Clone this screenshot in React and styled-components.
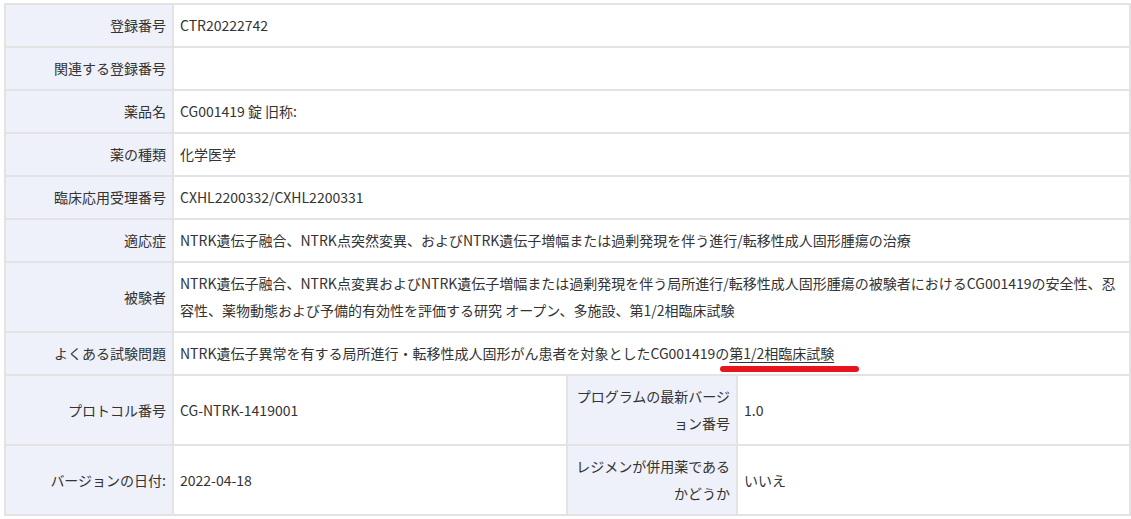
import React from "react";
import styled, { createGlobalStyle } from "styled-components";

const G = createGlobalStyle`
  body { margin: 0; background: #fff; font-family: "Noto Sans CJK JP", "Noto Sans", sans-serif; }
`;
const Wrap = styled.div` padding: 3px 0 0 4px; width: 1127px; `;
const Table = styled.table`
  width: 1127px; border-collapse: collapse; table-layout: fixed;
  font-size: 14px; color: #333;
`;
const Th = styled.th`
  background: #eef1f9; border: 2px solid #e3e3e3; font-weight: normal;
  text-align: right; padding: 7px 6px; line-height: 27px; vertical-align: middle;
`;
const Td = styled.td`
  border: 2px solid #e3e3e3; padding: 7px 6px; line-height: 27px; vertical-align: middle;
`;
const Mark = styled.span`
  position: relative; text-decoration: underline; text-underline-offset: 3px;
  &::after { content: ""; position: absolute; left: -9px; right: -25px; bottom: -9px; height: 6px; background: #e8151d; border-radius: 3px; }
`;

const single = [
  ["登録番号", "CTR20222742"],
  ["関連する登録番号", ""],
  ["薬品名", "CG001419 錠 旧称:"],
  ["薬の種類", "化学医学"],
  ["臨床応用受理番号", "CXHL2200332/CXHL2200331"],
  ["適応症", "NTRK遺伝子融合、NTRK点突然変異、およびNTRK遺伝子増幅または過剰発現を伴う進行/転移性成人固形腫瘍の治療"],
  ["被験者", "NTRK遺伝子融合、NTRK点変異およびNTRK遺伝子増幅または過剰発現を伴う局所進行/転移性成人固形腫瘍の被験者におけるCG001419の安全性、忍容性、薬物動態および予備的有効性を評価する研究 オープン、多施設、第1/2相臨床試験"],
];

export default function App() {
  return (
    <Wrap>
      <G />
      <Table>
        <colgroup>
          <col style={{ width: 168 }} />
          <col style={{ width: 394 }} />
          <col style={{ width: 170 }} />
          <col />
        </colgroup>
        <tbody>
          {single.map(([k, v]) => (
            <tr key={k}><Th>{k}</Th><Td colSpan={3}>{v}</Td></tr>
          ))}
          <tr>
            <Th>よくある試験問題</Th>
            <Td colSpan={3}>NTRK遺伝子異常を有する局所進行・転移性成人固形がん患者を対象としたCG001419の<Mark>第1/2相臨床試験</Mark></Td>
          </tr>
          <tr>
            <Th>プロトコル番号</Th><Td>CG-NTRK-1419001</Td>
            <Th>プログラムの最新バージョン番号</Th><Td>1.0</Td>
          </tr>
          <tr>
            <Th>バージョンの日付:</Th><Td>2022-04-18</Td>
            <Th>レジメンが併用薬であるかどうか</Th><Td>いいえ</Td>
          </tr>
        </tbody>
      </Table>
    </Wrap>
  );
}
